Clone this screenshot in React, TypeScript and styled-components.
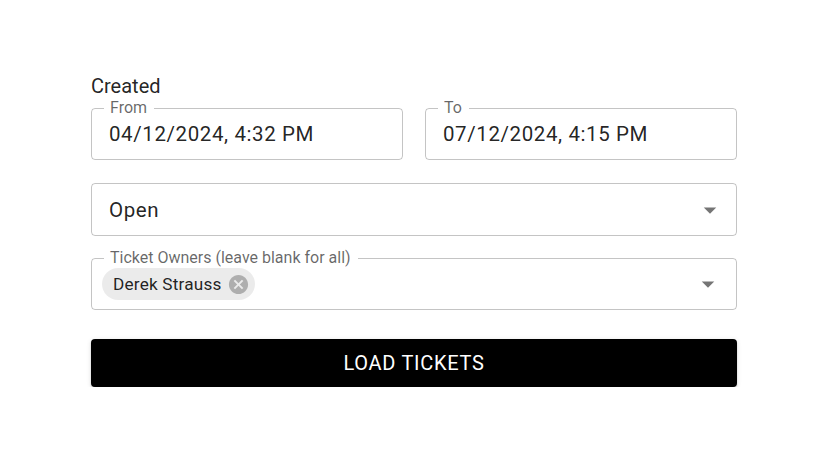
import React from 'react'
import styled, { createGlobalStyle } from 'styled-components';

const GlobalStyle = createGlobalStyle`
	html, body {
		margin: 0;
		padding: 0;
		background: #fff;
	}
	body {
		font-family: Roboto, "Liberation Sans", Arial, sans-serif;
		color: rgba(0, 0, 0, 0.87);
	}
`;

const ArrowDropDown = () => (
	<svg width="30" height="30" viewBox="0 0 24 24" fill="rgba(0,0,0,0.54)">
		<path d="M7 10l5 5 5-5z" />
	</svg>
);

const CancelIcon = () => (
	<svg width="23" height="23" viewBox="0 0 24 24" fill="rgba(0,0,0,0.26)">
		<path d="M12 2C6.47 2 2 6.47 2 12s4.47 10 10 10 10-4.47 10-10S17.53 2 12 2zm5 13.59L15.59 17 12 13.41 8.41 17 7 15.59 10.59 12 7 8.41 8.41 7 12 10.59 15.59 7 17 8.41 13.41 12 17 15.59z" />
	</svg>
);

type FieldProps = {
	label?: string;
	height?: number;
	padLeft?: number;
	padRight?: number;
	children: React.ReactNode;
	endIcon?: React.ReactNode;
}

const Field = ({ label, height = 52, padLeft = 18, padRight = 12, children, endIcon }: FieldProps) => (
	<InputRoot height={height} padLeft={padLeft} padRight={padRight}>
		{children}
		{endIcon && <EndAdornment>{endIcon}</EndAdornment>}
		<Outline hasLabel={!!label}>
			{label && <Legend>{label}</Legend>}
		</Outline>
	</InputRoot>
);

export default function App() {
	return <Page>
		<GlobalStyle />
		<Form>
			<Heading>Created</Heading>
			<DateRow>
				<Field label="From">
					<Value>04/12/2024, 4:32 PM</Value>
				</Field>
				<Field label="To">
					<Value>07/12/2024, 4:15 PM</Value>
				</Field>
			</DateRow>
			<Field height={53} endIcon={<ArrowDropDown />}>
				<Value>Open</Value>
			</Field>
			<Owners>
				<Field label="Ticket Owners (leave blank for all)" padLeft={11} padRight={14} endIcon={<ArrowDropDown />}>
					<Chip>
						<ChipLabel>Derek Strauss</ChipLabel>
						<ChipDelete><CancelIcon /></ChipDelete>
					</Chip>
				</Field>
			</Owners>
			<LoadButton>Load Tickets</LoadButton>
		</Form>
	</Page>;
}

// ================== styled elements =====================

const Page = styled('div')`
	padding: 74px 0 0 91px;
`;

const Form = styled('div')`
	width: 646px;
	display: flex;
	flex-direction: column;
	gap: 23px;
`;

const Heading = styled('div')`
	font-size: 20px;
	line-height: 24px;
	margin-bottom: -13px;
	color: rgba(0, 0, 0, 0.87);
`;

const DateRow = styled('div')`
	display: grid;
	grid-template-columns: 1fr 1fr;
	gap: 22px;
`;

const Owners = styled('div')`
	margin-top: -1px;
`;

const InputRoot = styled('div')<{ height: number; padLeft: number; padRight: number }>`
	position: relative;
	display: flex;
	align-items: center;
	box-sizing: border-box;
	height: ${props => props.height}px;
	padding: 0 ${props => props.padRight}px 0 ${props => props.padLeft}px;
`;

const Outline = styled('fieldset')<{ hasLabel: boolean }>`
	position: absolute;
	top: ${props => props.hasLabel ? -9 : 0}px;
	left: 0;
	right: 0;
	bottom: 0;
	margin: 0;
	padding: 0 12px;
	border: 1px solid rgba(0, 0, 0, 0.23);
	border-radius: 4px;
	pointer-events: none;
`;

const Legend = styled('legend')`
	padding: 0 7px 0 6px;
	font-size: 16px;
	line-height: 18px;
	color: rgba(0, 0, 0, 0.6);
	white-space: nowrap;
`;

const Value = styled('span')`
	font-size: 20.5px;
	letter-spacing: 0.6px;
	color: rgba(0, 0, 0, 0.87);
	flex: 1;
`;

const EndAdornment = styled('div')`
	display: flex;
	align-items: center;
	margin-left: auto;
`;

const Chip = styled('div')`
	display: inline-flex;
	align-items: center;
	height: 32px;
	border-radius: 16px;
	background: rgba(0, 0, 0, 0.08);
	padding: 0 5px 0 11px;
	gap: 5px;
`;

const ChipLabel = styled('span')`
	font-size: 17.2px;
	letter-spacing: 0.2px;
	color: rgba(0, 0, 0, 0.87);
`;

const ChipDelete = styled('span')`
	display: flex;
	align-items: center;
`;

const LoadButton = styled('button')`
	margin-top: 6px;
	height: 48px;
	border: none;
	border-radius: 4px;
	background: #000;
	color: #fff;
	font-family: Roboto, "Liberation Sans", Arial, sans-serif;
	font-size: 20px;
	font-weight: 400;
	letter-spacing: 0.7px;
	text-transform: uppercase;
	box-shadow: 0 3px 1px -2px rgba(0, 0, 0, 0.2), 0 2px 2px 0 rgba(0, 0, 0, 0.14), 0 1px 5px 0 rgba(0, 0, 0, 0.12);
	cursor: pointer;
`;
